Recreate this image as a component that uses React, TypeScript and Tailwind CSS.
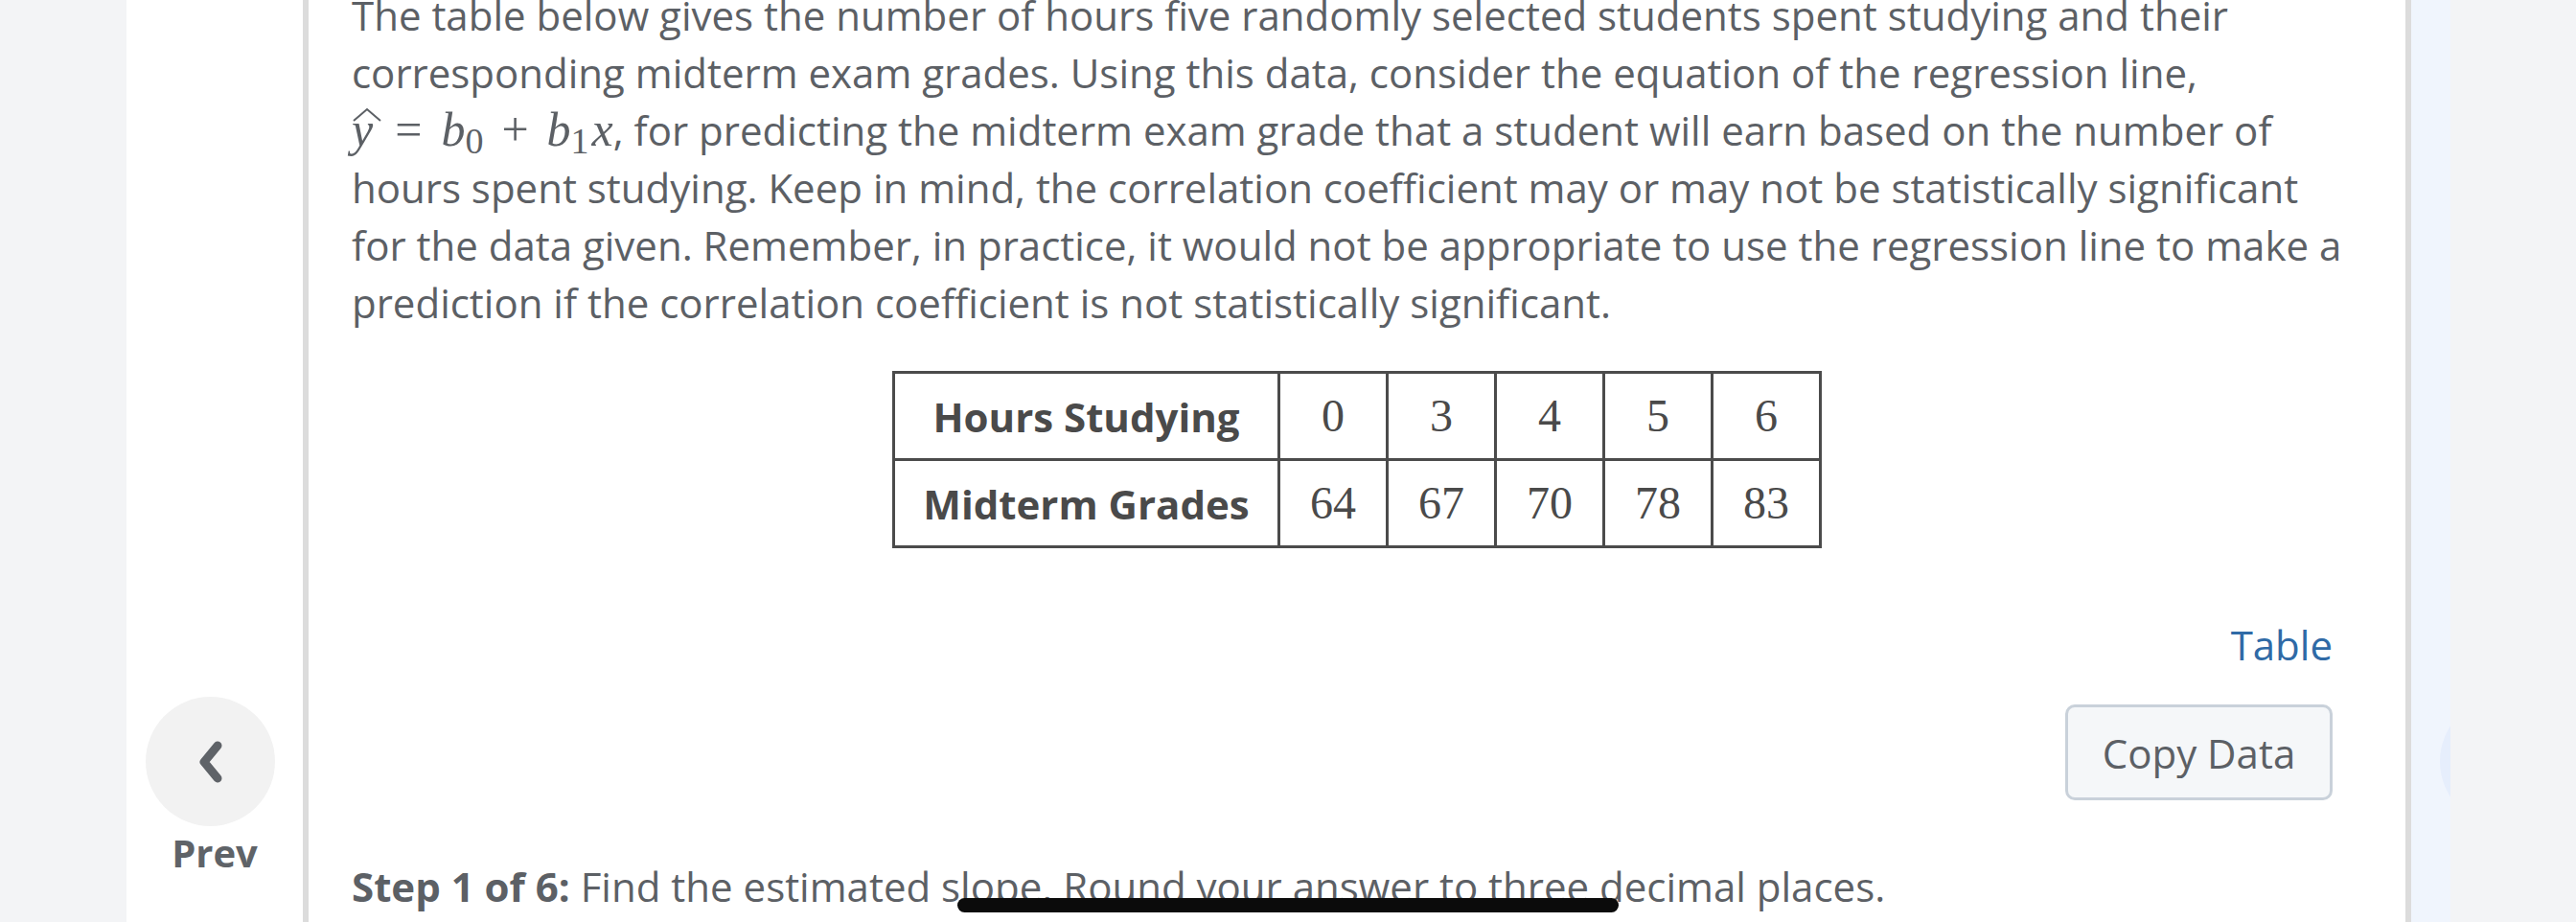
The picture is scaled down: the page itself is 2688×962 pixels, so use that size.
import { Fragment } from 'react';

const hours = [0, 3, 4, 5, 6];
const grades = [64, 67, 70, 78, 83];

const lines = [
  'The table below gives the number of hours five randomly selected students spent studying and their',
  'corresponding midterm exam grades. Using this data, consider the equation of the regression line,',
  null,
  'hours spent studying. Keep in mind, the correlation coefficient may or may not be statistically significant',
  'for the data given. Remember, in practice, it would not be appropriate to use the regression line to make a',
  'prediction if the correlation coefficient is not statistically significant.',
];

function Equation() {
  return (
    <span className="inline-flex items-baseline whitespace-nowrap font-['Liberation_Serif',serif] text-[50px] leading-[40px] text-[#5c6065]">
      <span className="relative italic">
        y
        <svg className="absolute left-[1px] top-[-3px]" width="30" height="15" viewBox="0 0 30 15">
          <polyline points="1,14 15,2 29,14" fill="none" stroke="#5c6065" strokeWidth="2" />
        </svg>
      </span>
      <span className="ml-[23px] mr-[20px]">=</span>
      <span className="italic">b</span>
      <span className="relative top-[8px] text-[38px]">0</span>
      <span className="mx-[19px]">+</span>
      <span className="italic">b</span>
      <span className="relative top-[8px] text-[38px]">1</span>
      <span className="ml-[3px] italic">x</span>
    </span>
  );
}

export default function App() {
  return (
    <div className="relative flex h-[962px] w-[2688px] overflow-hidden bg-[#f3f4f6] font-['Open_Sans','Liberation_Sans',sans-serif]">
      <div className="w-[132px] shrink-0" />

      {/* prev nav */}
      <div className="flex w-[184px] shrink-0 flex-col items-center bg-white pt-[727px]">
        <button className="mr-[9px] flex h-[135px] w-[135px] items-center justify-center rounded-full bg-[#f2f2f2]">
          <svg width="40" height="50" viewBox="0 0 40 50">
            <polyline points="27,8 13,25 27,42" fill="none" stroke="#5f6368" strokeWidth="9" strokeLinecap="round" strokeLinejoin="round" />
          </svg>
        </button>
        <span className="-mt-[2px] text-[40px] font-bold leading-[60px] text-[#5f6368]">Prev</span>
      </div>
      <div className="w-[6px] shrink-0 bg-[#dcdcdc]" />

      {/* question */}
      <main className="flex w-[2188px] shrink-0 flex-col bg-white px-[45px]">
        <p className="-mt-[14px] text-[42px] leading-[60px] text-[#5c6065]">
          {lines.map((line, i) => (
            <Fragment key={i}>
              {line ?? (
                <>
                  <Equation />, for predicting the midterm exam grade that a student will earn based on the number of
                </>
              )}
              {i < lines.length - 1 && <br />}
            </Fragment>
          ))}
        </p>

        <table className="mx-auto mt-[41px] border-collapse text-[#4a4a4a]">
          <tbody>
            <tr>
              <th className="h-[91px] w-[402px] border-[3px] border-[#4b4b4b] text-[42px] font-bold">Hours Studying</th>
              {hours.map((h) => (
                <td key={h} className="w-[113px] border-[3px] border-[#4b4b4b] text-center font-['Liberation_Serif',serif] text-[48px]">{h}</td>
              ))}
            </tr>
            <tr>
              <th className="h-[91px] w-[402px] border-[3px] border-[#4b4b4b] text-[42px] font-bold">Midterm Grades</th>
              {grades.map((g) => (
                <td key={g} className="w-[113px] border-[3px] border-[#4b4b4b] text-center font-['Liberation_Serif',serif] text-[48px]">{g}</td>
              ))}
            </tr>
          </tbody>
        </table>

        <div className="mt-[71px] flex flex-col items-end pr-[31px]">
          <a className="text-[42px] leading-[60px] text-[#2f6aa6]">Table</a>
          <button className="mt-[32px] h-[100px] w-[279px] rounded-[10px] border-[3px] border-[#c9d1da] bg-[#f5f7f9] text-[42px] text-[#5c6065]">
            Copy Data
          </button>
        </div>

        <p className="mt-[60px] text-[42px] leading-[60px] text-[#5c6065]">
          <span className="font-bold">Step 1 of 6:</span> Find the estimated slope. Round your answer to three decimal places.
        </p>
      </main>
      <div className="w-[6px] shrink-0 bg-[#dcdcdc]" />

      {/* next nav, mostly off screen */}
      <div className="w-[41px] shrink-0 overflow-hidden bg-[#f0f5fd] pl-[30px] pt-[727px]">
        <div className="h-[135px] w-[135px] rounded-full bg-[#e6eefc]" />
      </div>
      <div className="flex-1" />

      <div className="absolute bottom-[10px] left-1/2 h-[15px] w-[690px] -translate-x-1/2 rounded-full bg-[#0b0b0b]" />
    </div>
  );
}
